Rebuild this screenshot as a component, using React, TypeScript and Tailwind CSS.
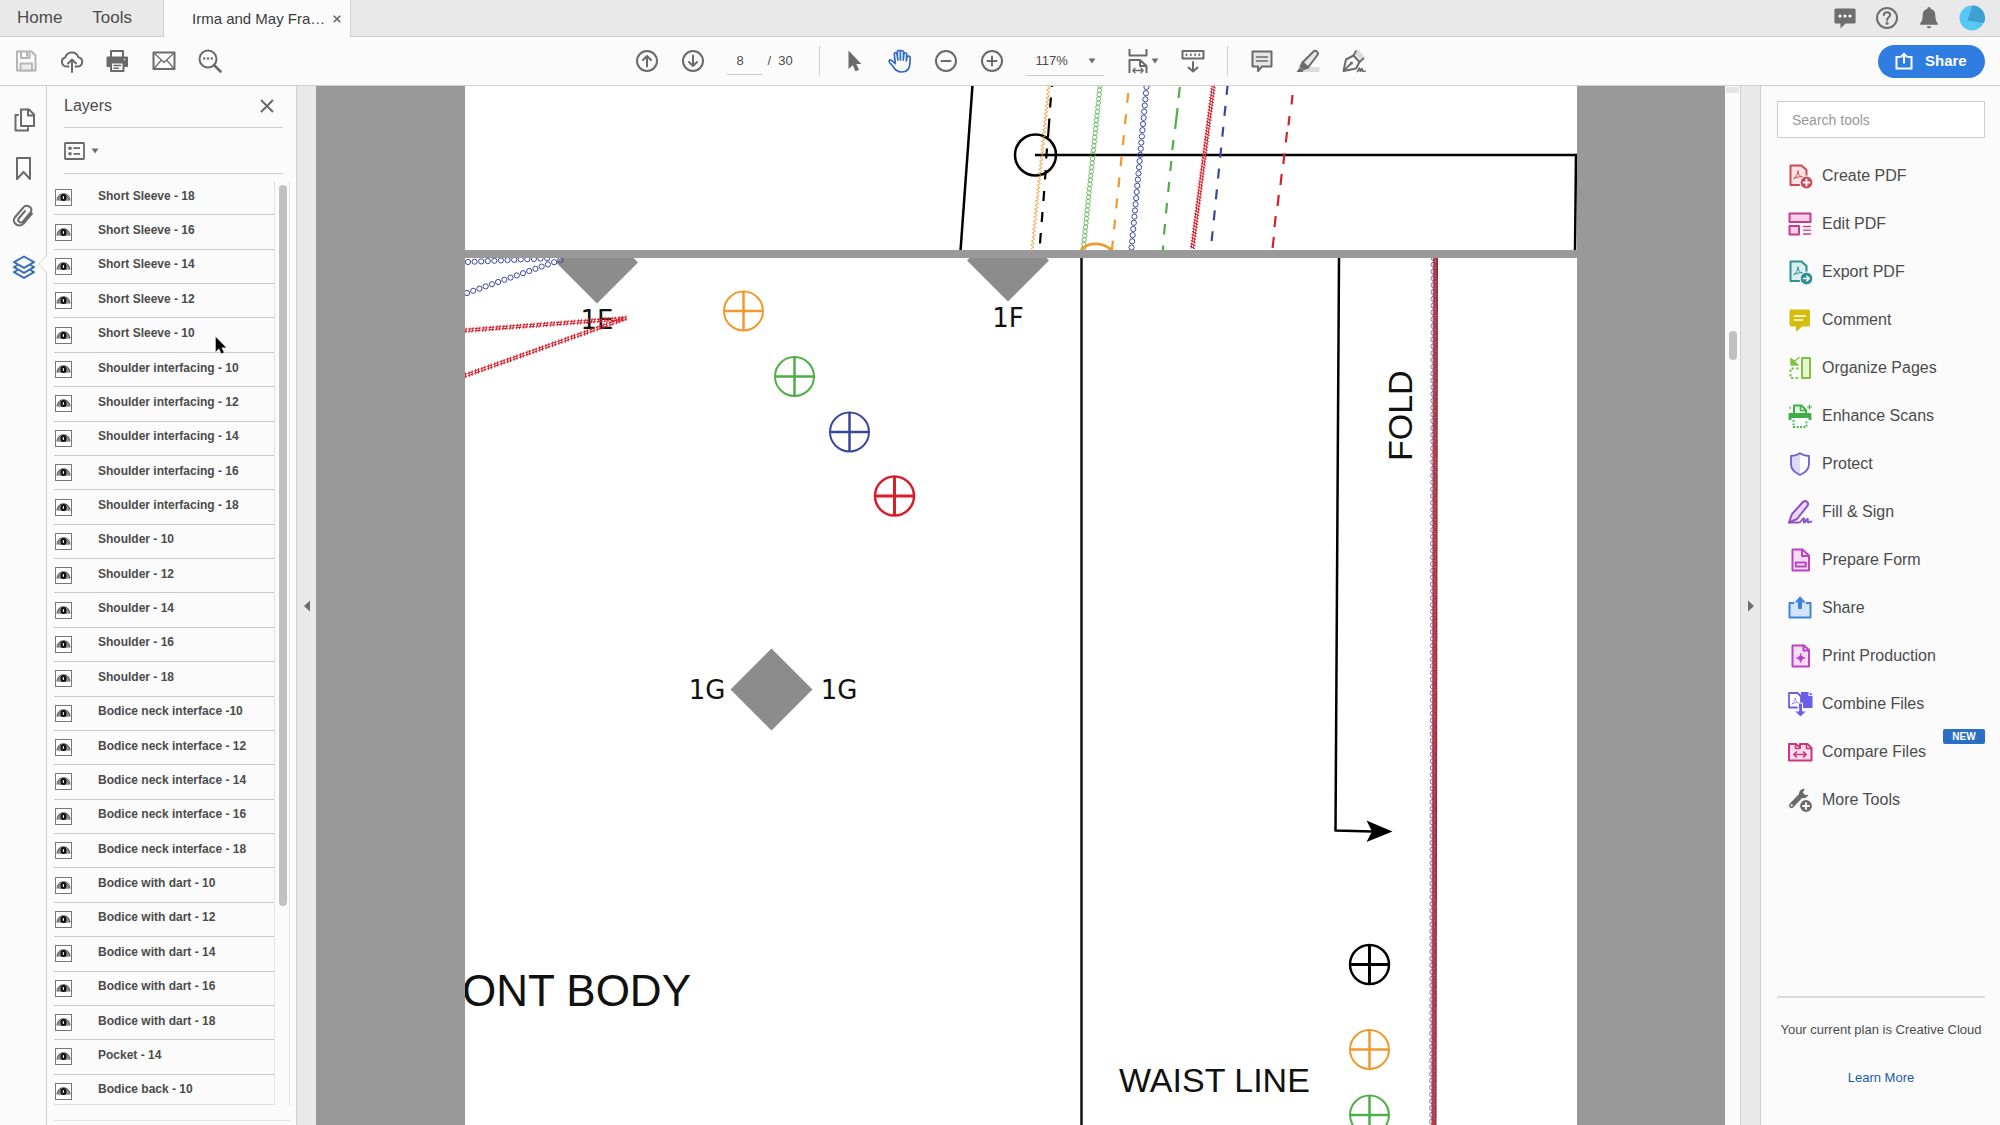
import React from "react";

type IconProps = { children: React.ReactNode; className?: string };

function Icon({ children, className = "size-6" }: IconProps) {
  return (
    <svg viewBox="0 0 24 24" fill="none" stroke="currentColor" strokeWidth="2" strokeLinejoin="round" strokeLinecap="round" aria-hidden="true" className={className}>
      {children}
    </svg>
  );
}

function IconButton({ label, children, className = "" }: { label: string; children: React.ReactNode; className?: string }) {
  return (
    <button type="button" aria-label={label} className={`flex shrink-0 items-center justify-center ${className}`}>
      {children}
    </button>
  );
}

function Caret() {
  return (
    <svg viewBox="0 0 8 6" className="h-[6px] w-2 shrink-0" aria-hidden="true">
      <path d="M0.5 0.5h7L4 5.5z" fill="#6e6e6e" />
    </svg>
  );
}

/* ---------- Top tab bar ---------- */

function TabBar() {
  return (
    <header className="flex h-[37px] shrink-0 bg-[#e9e9e9] text-[#4b4b4b]">
      <nav className="flex w-[164px] items-center gap-[30px] border-r border-b border-[#cfcfcf] pl-[17px] text-[17px]">
        <button type="button">Home</button>
        <button type="button">Tools</button>
      </nav>
      <div className="flex w-[186px] items-center bg-[#fbfbfb] pt-px pl-7 text-[15px] text-[#3c3c3c]">
        <span className="w-[132px] whitespace-nowrap">Irma and May Fra…</span>
        <IconButton label="Close tab" className="ml-[9px]">
          <svg viewBox="0 0 8 8" className="size-2" aria-hidden="true">
            <path d="M0.7 0.7l6.6 6.6M7.3 0.7L0.7 7.3" stroke="#666" strokeWidth="1.6" />
          </svg>
        </IconButton>
      </div>
      <div className="flex flex-1 items-center justify-end gap-[18px] border-b border-l border-[#cfcfcf] pr-[15px] text-[#6e6e6e]">
        <IconButton label="Notifications chat">
          <Icon>
            <path d="M3 2.500h18a1.600 1.600 0 0 1 1.600 1.600v11.800a1.600 1.600 0 0 1-1.600 1.600H12.500L7.500 22.500v-5H3a1.600 1.600 0 0 1-1.600-1.600V4.100A1.600 1.600 0 0 1 3 2.500z" fill="currentColor" stroke="none" />
            <g fill="#fff" stroke="none">
              <circle cx="7" cy="10" r="1.600" />
              <circle cx="12" cy="10" r="1.600" />
              <circle cx="17" cy="10" r="1.600" />
            </g>
          </Icon>
        </IconButton>
        <IconButton label="Help">
          <Icon>
            <circle cx="12" cy="12" r="10" />
            <path d="M8.900 9.300c0-2 1.400-3 3.100-3s3.100 1 3.100 2.700c0 2.300-3 2.400-3 5" />
            <circle cx="12.100" cy="17.200" r="0.600" />
          </Icon>
        </IconButton>
        <IconButton label="Alerts">
          <Icon>
            <path d="M10.300 2.800a1.700 1.700 0 0 1 3.400 0c3 .8 4.600 3.200 4.600 6.200 0 4.500 1 6.800 2.500 8.300v1.500H3.200v-1.500c1.500-1.500 2.500-3.800 2.500-8.300 0-3 1.600-5.400 4.600-6.200zM9.800 20.200h4.400c-.2 1.400-1.100 2-2.200 2s-2-.6-2.200-2z" fill="currentColor" stroke="none" />
          </Icon>
        </IconButton>
        <IconButton label="Account">
          <svg viewBox="0 0 26 26" className="size-[26px]" aria-hidden="true">
            <circle cx="13" cy="13" r="12.500" fill="#56c8f5" />
            <path d="M13.500.5L8.500 15.500 25 18A12.500 12.500 0 0 0 13.500.5z" fill="#40a0cf" />
          </svg>
        </IconButton>
      </div>
    </header>
  );
}

/* ---------- Toolbar ---------- */

function Toolbar() {
  return (
    <div className="grid h-[49px] shrink-0 grid-cols-[1fr_auto_1fr] items-center border-b border-[#cfcfcf] bg-[#fbfbfb] text-[#6a6a6a]">
      <div className="flex gap-[22px] pl-[14px]">
        <IconButton label="Save" className="text-[#b5b5b5]">
          <Icon>
            <path d="M3 2.500h14.500L21.500 6.500V21.500H3z" />
            <path d="M7 2.500v6.500h8.500v-6.500M13 4v3" />
            <path d="M6.500 21.500V14.500h11.500v7z" fill="#ededed" />
          </Icon>
        </IconButton>
        <IconButton label="Upload">
          <Icon>
            <path d="M8.500 17.500H6A4.600 4.600 0 0 1 5.300 8.500 6.800 6.800 0 0 1 18.300 8.200 4.700 4.700 0 0 1 18 17.500h-2.500" />
            <path d="M12 23V11M8 14.500l4-4 4 4" />
          </Icon>
        </IconButton>
        <IconButton label="Print">
          <Icon>
            <path d="M5 8V2h12v6" />
            <path d="M1.500 8.500h19.500v8.500h-3v-3H4.500v3h-3z" fill="currentColor" />
            <path d="M5 13.500h12.500v8.500H5z" fill="#fbfbfb" />
            <path d="M8 16.500h6.500M8 19.200h4.500" strokeWidth="1.500" />
            <circle cx="18.500" cy="10.500" r="0.800" fill="#fff" stroke="none" />
          </Icon>
        </IconButton>
        <IconButton label="Email">
          <Icon>
            <path d="M1.500 3.500h21v16.500h-21z" />
            <path d="M2 4l10 9.500L22 4M2 19.500l7-8M22 19.500l-7-8" strokeWidth="1.200" />
          </Icon>
        </IconButton>
        <IconButton label="Find">
          <Icon>
            <circle cx="10" cy="10" r="8.500" />
            <path d="M16.500 16.500l6 6" strokeWidth="2.600" />
            <g fill="currentColor" stroke="none">
              <circle cx="6.200" cy="9.500" r="1.200" />
              <circle cx="10" cy="9.500" r="1.200" />
              <circle cx="13.800" cy="9.500" r="1.200" />
            </g>
          </Icon>
        </IconButton>
      </div>

      <div className="flex items-center gap-[22px]">
        <IconButton label="Previous page">
          <Icon>
            <circle cx="12" cy="12" r="10" />
            <path d="M12 17.500V7M8 11l4-4 4 4" />
          </Icon>
        </IconButton>
        <IconButton label="Next page">
          <Icon>
            <circle cx="12" cy="12" r="10" />
            <path d="M12 6.500V17M8 13l4 4 4-4" />
          </Icon>
        </IconButton>
        <div className="flex w-[70px] items-center gap-[6px] text-[13px] text-[#4b4b4b]">
          <input aria-label="Page number" defaultValue="8" className="h-7 w-[35px] border-b border-[#c8c8c8] bg-transparent pr-2 text-center" />
          <span className="whitespace-pre">/  30</span>
        </div>
        <div className="h-[30px] w-px bg-[#cfcfcf]" />
        <IconButton label="Select tool">
          <Icon>
            <path d="M6.500 1.500v18.500l4.300-3.700 2.700 6 3.500-1.600-2.700-5.800h5z" fill="currentColor" stroke="none" />
          </Icon>
        </IconButton>
        <IconButton label="Hand tool" className="text-[#2d6cc0]">
          <Icon>
            <path d="M7.200 13.500L6.300 5.200c-.2-2 2.400-2.300 2.700-.3l.9 6M9.600 9L9.300 3c0-2.200 3-2.200 3.100 0v8M12.400 10V3c.1-2 3-2 3.100.2l-.2 8M15.400 10l.5-5c.3-1.900 2.900-1.600 2.800.4L18.400 12M18.500 10.500l.6-2.300c.6-1.900 3.300-1.400 3.100.6l-.4 6.200c-.2 5-3.300 8-8.300 8-4.200 0-6.500-1.800-8.200-5.300L1.800 13.800c-1.200-1.700-.6-3.400 1.500-2.600 1.300.5 2.500 2 3.900 3.400" strokeWidth="1.700" />
          </Icon>
        </IconButton>
        <IconButton label="Zoom out">
          <Icon>
            <circle cx="12" cy="12" r="10" />
            <path d="M7.500 12h9" />
          </Icon>
        </IconButton>
        <IconButton label="Zoom in">
          <Icon>
            <circle cx="12" cy="12" r="10" />
            <path d="M7.500 12h9M12 7.500v9" />
          </Icon>
        </IconButton>
        <div className="flex w-[78px] items-center border-b border-[#c8c8c8] pr-2">
          <select aria-label="Zoom level" className="h-7 flex-1 appearance-none bg-transparent pl-[10px] text-[13px] text-[#4b4b4b]">
            <option>117%</option>
          </select>
          <Caret />
        </div>
        <IconButton label="Page fit" className="w-[33px] gap-px">
          <Icon className="h-[26px] w-6">
            <path d="M3.500 0v6.500h17V0M3.500 24v-13h10.500l6.500 6v7M14 11v6h6.500" strokeLinecap="butt" />
            <path d="M7 21.500h10M9 19.300L6.800 21.500 9 23.700M15 19.300l2.200 2.200-2.200 2.200" strokeWidth="1.400" />
          </Icon>
          <Caret />
        </IconButton>
        <IconButton label="Scrolling">
          <Icon>
            <path d="M1.500 2h21v7.500h-21z" />
            <path d="M5.500 5v1.500M9.800 5v1.500M14.100 5v1.500M18.400 5v1.500" strokeWidth="1.600" />
            <path d="M12 13v9.500M7.500 18.500l4.500 4 4.500-4" />
          </Icon>
        </IconButton>
        <div className="h-[30px] w-px bg-[#cfcfcf]" />
        <IconButton label="Add comment">
          <Icon>
            <path d="M2.500 2.500h19v15H12L8 22v-4.500H2.500z" fill="#e6e6e6" />
            <path d="M6.500 8h11M6.500 12h11" strokeWidth="1.500" />
          </Icon>
        </IconButton>
        <IconButton label="Highlight">
          <Icon>
            <path d="M9 18h14.500v5H5z" fill="#dcdcdc" stroke="none" />
            <path d="M6.500 13.500L17.500 2.500c2-2 5.500.8 4 3.500L12 18.500z" fill="#e6e6e6" />
            <path d="M6.500 13.500l5.500 5-4 1.500-3.500-2.500z" fill="currentColor" />
            <path d="M3.800 18.500l4 2.700-1.300 1.800H.5z" fill="currentColor" stroke="none" />
          </Icon>
        </IconButton>
        <IconButton label="Sign">
          <Icon>
            <path d="M13 5l3.500-4 6.500 7-4 3.500z" fill="#dcdcdc" stroke="none" />
            <path d="M1.500 22L4 10.500 11.500 6.500 17.500 13 14 19.500z" fill="#fbfbfb" />
            <path d="M11.500 6.500l2.500-4.500M17.500 13l4-3.500M2 21.500l7-7" strokeWidth="1.800" />
            <circle cx="9.500" cy="14" r="1.500" fill="currentColor" stroke="none" />
            <path d="M15.500 22.500l2-3.500.8 3.300 1.700-2.800.6 2.800 2.600-.3" strokeWidth="1.600" />
          </Icon>
        </IconButton>
      </div>

      <div className="flex justify-end pr-[15px]">
        <button type="button" className="flex h-[33px] w-[107px] items-center gap-3 rounded-full bg-[#2f7de1] pl-[17px] text-[15px] font-bold text-white">
          <svg viewBox="0 0 18 18" className="size-[18px]" fill="none" stroke="#fff" strokeWidth="2" aria-hidden="true">
            <path d="M5.500 5H1.500v11.500h15V5h-4M9 11.500V2M5.800 5L9 1.800 12.200 5" />
          </svg>
          Share
        </button>
      </div>
    </div>
  );
}

/* ---------- Left side ---------- */

function NavRail() {
  return (
    <nav className="relative w-[47px] shrink-0 border-r border-[#cfcfcf] bg-[#fbfbfb] pt-[22px] pl-3 text-[#6a6a6a]">
      <div className="flex w-6 flex-col gap-6">
        <IconButton label="Page thumbnails">
          <Icon>
            <path d="M10 1.500h7L22 6.500v11.500H9V1.500z" />
            <path d="M16 1.500v6h6" />
            <path d="M6 7H3.500v15.500h12.500V20" />
          </Icon>
        </IconButton>
        <IconButton label="Bookmarks">
          <Icon>
            <path d="M5 2h13v21l-6.500-7-6.500 7z" />
          </Icon>
        </IconButton>
        <IconButton label="Attachments">
          <Icon>
            <path d="M20 9.500l-8.500 10C7.500 24.500-1 19 2.800 13.500l8.500-10C14.500-.5 22 3.500 18.500 8.500l-7.500 9c-2.300 2.500-6-.3-4.300-3L13 7" />
          </Icon>
        </IconButton>
        <IconButton label="Layers" className="mt-[3px] text-[#3a6fb7]">
          <Icon>
            <path d="M12 1.500l10 5.700-10 5.700-10-5.700z" />
            <path d="M4.800 10.500L2 12.200l10 5.600 10-5.600-2.800-1.700M4.800 15.500L2 17.200l10 5.700 10-5.700-2.800-1.700" />
          </Icon>
        </IconButton>
      </div>
      <svg viewBox="0 0 9 18" className="absolute top-[169px] -right-px h-[18px] w-[9px]" aria-hidden="true">
        <path d="M9 0L1 9l8 9" fill="#fbfbfb" stroke="#cfcfcf" />
      </svg>
    </nav>
  );
}

const LAYERS = [
  "Short Sleeve - 18",
  "Short Sleeve - 16",
  "Short Sleeve - 14",
  "Short Sleeve - 12",
  "Short Sleeve - 10",
  "Shoulder interfacing - 10",
  "Shoulder interfacing - 12",
  "Shoulder interfacing - 14",
  "Shoulder interfacing - 16",
  "Shoulder interfacing - 18",
  "Shoulder - 10",
  "Shoulder - 12",
  "Shoulder - 14",
  "Shoulder - 16",
  "Shoulder - 18",
  "Bodice neck interface -10",
  "Bodice neck interface - 12",
  "Bodice neck interface - 14",
  "Bodice neck interface - 16",
  "Bodice neck interface - 18",
  "Bodice with dart - 10",
  "Bodice with dart - 12",
  "Bodice with dart - 14",
  "Bodice with dart - 16",
  "Bodice with dart - 18",
  "Pocket - 14",
  "Bodice back - 10",
];

function Eye() {
  return (
    <svg viewBox="0 0 17 17" className="size-[17px]" aria-hidden="true">
      <rect x="0.500" y="0.500" width="16" height="16" fill="#fff" stroke="#777" />
      <path d="M2.500 11.500C2.500 7 5.500 5 8.500 5s6 2 6 6.500c-2 .6-10 .6-12 0z" fill="#8f8f8f" />
      <path d="M2 11.500C2.500 6.500 5.500 4.800 8.500 4.800s6 1.700 6.500 6.700" fill="none" stroke="#333" strokeWidth="1" />
      <ellipse cx="8.500" cy="8.600" rx="3" ry="3.500" fill="#111" />
      <rect x="7.800" y="7.200" width="1.200" height="2.600" fill="#fff" />
    </svg>
  );
}

function LayersPanel() {
  return (
    <aside className="relative flex w-[250px] shrink-0 flex-col border-r border-[#cfcfcf] bg-[#fbfbfb] text-[#4b4b4b]">
      <div className="mr-[13px] ml-[17px] flex h-[42px] items-center justify-between border-b border-[#cfcfcf] pr-[9px] pb-px">
        <h2 className="text-[16px]">Layers</h2>
        <IconButton label="Close panel">
          <svg viewBox="0 0 14 14" className="size-[14px]" aria-hidden="true">
            <path d="M1 1l12 12M13 1L1 13" stroke="#6a6a6a" strokeWidth="2" />
          </svg>
        </IconButton>
      </div>
      <div className="mr-[13px] ml-[17px] flex h-[46px] items-center border-b border-[#cfcfcf]">
        <button type="button" aria-label="Options" className="flex items-center gap-[6px]">
          <svg viewBox="0 0 21 18" className="h-[18px] w-[21px]" fill="none" stroke="#6a6a6a" strokeWidth="1.800" aria-hidden="true">
            <rect x="1" y="1" width="19" height="16" rx="0.500" />
            <circle cx="6" cy="6.200" r="1.800" fill="#6a6a6a" stroke="none" />
            <circle cx="6" cy="11.800" r="1.800" fill="#6a6a6a" stroke="none" />
            <path d="M9.500 6.200h6.500M9.500 11.800h6.500" />
          </svg>
          <Caret />
        </button>
      </div>
      <div className="mt-[7px] mr-[6px] mb-[15px] ml-[7px] flex min-h-0 flex-1">
        <div className="min-w-0 flex-1 overflow-hidden border-b border-[#dedede]">
          <ul className="grid h-[928px] auto-rows-fr">
            {LAYERS.map((name) => (
              <li key={name} className="flex items-center gap-[26px] border-b border-[#c9c9c9] pl-px text-[12px] font-bold">
                <button type="button" aria-label={`Toggle ${name}`}>
                  <Eye />
                </button>
                <span className="pb-1 whitespace-nowrap">{name}</span>
              </li>
            ))}
          </ul>
        </div>
        <div className="w-4 shrink-0 border-x border-[#e4e4e4] pt-1 pl-1">
          <div className="h-[721px] w-2 rounded-full bg-[#c1c1c1]" />
        </div>
      </div>
      <div className="mr-[6px] mb-1 ml-[7px] h-px shrink-0 bg-[#e4e4e4]" />
      <svg viewBox="0 0 12 18" className="absolute top-[250px] left-[168px] h-[18px] w-3" aria-hidden="true">
        <path d="M0.500 0.500v15.500l3.500-3.200 2.300 5 2.800-1.200-2.300-4.800h4.700z" fill="#000" stroke="#fff" strokeWidth="0.400" />
      </svg>
    </aside>
  );
}

function Gutter({ direction }: { direction: "left" | "right" }) {
  return (
    <button
      type="button"
      aria-label={direction === "left" ? "Collapse left panel" : "Collapse right panel"}
      className="flex w-[19px] shrink-0 items-center justify-center bg-[#e9e9e9]"
    >
      <svg viewBox="0 0 6 12" className={direction === "left" ? "h-3 w-[6px]" : "h-3 w-[6px] rotate-180"} aria-hidden="true">
        <path d="M6 0.500v11L0 6z" fill="#6e6e6e" />
      </svg>
    </button>
  );
}

/* ---------- Pattern drawing ---------- */

type Segment = { x1: number; y1: number; x2: number; y2: number };

function along({ x1, y1, x2, y2 }: Segment, step: number) {
  const length = Math.hypot(x2 - x1, y2 - y1);
  const ux = (x2 - x1) / length;
  const uy = (y2 - y1) / length;
  const count = Math.floor(length / step);
  return Array.from({ length: count + 1 }, (_, i) => ({ x: x1 + ux * i * step, y: y1 + uy * i * step, ux, uy }));
}

function Beads({ line, step, r, color, width = 1 }: { line: Segment; step: number; r: number; color: string; width?: number }) {
  return (
    <g fill="none" stroke={color} strokeWidth={width}>
      {along(line, step).map((p, i) => (
        <circle key={i} cx={p.x} cy={p.y} r={r} />
      ))}
    </g>
  );
}

/* A row of small hash marks: slanted strokes in pairs with two short bars through each pair. */
function HashLine({ line, color, half = 3, step = 6.8 }: { line: Segment; color: string; half?: number; step?: number }) {
  const d = along(line, step)
    .map((p) => {
      const at = (t: number, n: number) => `${(p.x + p.ux * t - p.uy * n).toFixed(2)} ${(p.y + p.uy * t + p.ux * n).toFixed(2)}`;
      return [
        `M${at(-2.2, half)}L${at(-0.4, -half)}`,
        `M${at(0.9, half)}L${at(2.7, -half)}`,
        `M${at(-2.6, -1.1)}L${at(3.2, -1.1)}`,
        `M${at(-2.8, 1.1)}L${at(3, 1.1)}`,
      ].join("");
    })
    .join("");
  return <path d={d} stroke={color} fill="none" strokeWidth="1" />;
}

function Zigzag({ line, color }: { line: Segment; color: string }) {
  const points = along(line, 2)
    .map((p, i) => {
      const s = i % 2 ? 1.6 : -1.6;
      return `${p.x - p.uy * s},${p.y + p.ux * s}`;
    })
    .join(" ");
  return <polyline points={points} fill="none" stroke={color} strokeWidth="0.900" />;
}

function Target({ x, y, color, width = 2 }: { x: number; y: number; color: string; width?: number }) {
  return (
    <g fill="none" stroke={color} strokeWidth={width}>
      <circle cx={x} cy={y} r="19.500" />
      <path d={`M${x - 19.5} ${y}h39M${x} ${y - 19.5}v39`} strokeWidth={width + 0.5} />
    </g>
  );
}

const ORANGE = "#ee9a2e";
const GREEN = "#4fae46";
const BLUE = "#38479c";
const RED = "#d81f2c";

function UpperPage() {
  return (
    <svg viewBox="465 86 1112 164" className="block h-[164px] w-[1112px] shrink-0 bg-white" role="img" aria-label="Pattern page 7">
      <g fill="none" stroke="#000" strokeWidth="2.500">
        <path d="M972.500 85L960.500 251" />
        <circle cx="1035.500" cy="155" r="20.500" />
        <path d="M1035 155H1576L1575 251" />
        <path d="M1051.800 85.500v1.500M1050.900 97.500l-.8 10M1049.400 118.500l-1.400 19M1047 148.500l-.8 10M1045.800 170l-.8 9.500M1044.200 191l-.8 10M1042.500 212l-.8 10M1040.800 233l-.8 10.500" strokeWidth="2.200" />
      </g>
      <Zigzag line={{ x1: 1049, y1: 84, x2: 1032, y2: 251 }} color={ORANGE} />
      <Beads line={{ x1: 1100, y1: 86, x2: 1083, y2: 252 }} step={4.3} r={2.2} color={GREEN} width={0.8} />
      <g fill="none" strokeWidth="2.200">
        <path d="M1128.200 93L1111.800 251" stroke={ORANGE} strokeDasharray="10 11.200" />
        <path d="M1081 251c5-9 22-10 31.500 0" stroke={ORANGE} strokeWidth="2.800" />
        <path d="M1179.800 87l-1.200 11M1177.600 108l-2.500 21M1173.500 140l-1.200 10M1171.300 161l-1 10M1169.200 182l-1 10M1167 203l-1 10.500M1165 224l-1 10.500M1163.300 245.500l-.6 6" stroke={GREEN} />
        <path d="M1227.600 85L1211.600 241.500" stroke={BLUE} strokeDasharray="10 11" />
        <path d="M1292.500 95l-1 9.500M1289.500 116l-1 9.500M1287 132l-1.200 10.500M1284.500 153.500l-1.200 10.500M1281.700 174l-1.200 11M1278.800 195l-1.300 11M1275.700 216l-1.200 11M1273.800 237l-1.200 11" stroke={RED} />
      </g>
      <Beads line={{ x1: 1146.5, y1: 87, x2: 1131.5, y2: 248 }} step={6.2} r={2.6} color={BLUE} />
      <HashLine line={{ x1: 1213.5, y1: 85, x2: 1192, y2: 251 }} color={RED} half={2.6} step={6} />
    </svg>
  );
}

function LowerPage() {
  return (
    <svg viewBox="465 258 1112 880" className="block h-[880px] w-[1112px] shrink-0 bg-white" role="img" aria-label="Pattern page 8">
      <g fill="#8c8c8c">
        <path d="M597 221.500l41 41-41 41-41-41z" />
        <path d="M1008 219.500l41 41-41 41-41-41z" />
        <path d="M771.500 648.500l41 41-41 41-41-41z" />
      </g>
      <g fill="#111" fontFamily="'DejaVu Sans', sans-serif" fontSize="26" textAnchor="middle">
        <text x="597" y="329">1E</text>
        <text x="1008" y="327">1F</text>
        <text x="707" y="699">1G</text>
        <text x="839" y="699">1G</text>
      </g>
      <Beads line={{ x1: 468, y1: 262, x2: 552, y2: 258 }} step={6.6} r={2.6} color={BLUE} />
      <Beads line={{ x1: 467, y1: 293, x2: 566, y2: 258 }} step={6.6} r={2.6} color={BLUE} />
      <HashLine line={{ x1: 464, y1: 330.5, x2: 625, y2: 318.5 }} color={RED} half={2.6} />
      <HashLine line={{ x1: 464, y1: 376, x2: 625, y2: 318.5 }} color={RED} half={2.6} />

      <Target x={743.5} y={311} color={ORANGE} />
      <Target x={794.5} y={376.5} color={GREEN} />
      <Target x={849.5} y={432} color={BLUE} />
      <Target x={894.5} y={496} color={RED} width={2.5} />
      <Target x={1369.5} y={964.5} color="#000" width={2.5} />
      <Target x={1369.5} y={1049.5} color={ORANGE} />
      <Target x={1369.5} y={1115} color={GREEN} />

      <path d="M1081.500 258V1138" stroke="#111" strokeWidth="2.500" />
      <path d="M1339 258L1335.500 830.500L1372 831.500" fill="none" stroke="#000" strokeWidth="2.500" strokeLinejoin="round" />
      <path d="M1392.500 831.500L1366.500 820.500L1372 831.500L1366.500 842z" fill="#000" />

      <g>
        <path d="M1437 258L1435.500 1138" stroke="#6b3a34" strokeWidth="2" />
        <path d="M1434.500 258L1433 1138" stroke="#d9606a" strokeWidth="3.500" />
        <Beads line={{ x1: 1433.5, y1: 258, x2: 1432, y2: 1138 }} step={6.8} r={2.5} color={BLUE} width={0.7} />
        <HashLine line={{ x1: 1435.5, y1: 258, x2: 1434, y2: 1138 }} color="#b8303c" half={2} step={6} />
      </g>

      <g fill="#111" fontFamily="'Liberation Sans', Arial, sans-serif">
        <text x="691" y="1006" fontSize="44" textAnchor="end">ONT BODY</text>
        <text x="1119" y="1092" fontSize="34">WAIST LINE</text>
        <text transform="translate(1412 461) rotate(-90)" fontSize="34">FOLD</text>
      </g>
    </svg>
  );
}

function DocumentView() {
  return (
    <main className="flex min-w-0 flex-1 flex-col items-center gap-2 overflow-hidden bg-[#999999] pl-px">
      <UpperPage />
      <LowerPage />
    </main>
  );
}

function DocumentScrollbar() {
  return (
    <div className="w-4 shrink-0 border-r border-[#cfcfcf] bg-[#fbfbfb] px-px pt-px">
      <div className="h-[6px] bg-[#e4e4e4]" />
      <div className="mx-auto mt-[238px] h-[29px] w-2 rounded-full bg-[#c1c1c1]" />
    </div>
  );
}

/* ---------- Tools panel ---------- */

const PDF_MARK = "M7 14.500c2-1 4-4.500 4-7.500M11 7c0 3 1.500 5.500 4.500 6M7 14.500c2-1.500 6-2 8.500-1.500";

const TOOLS: { name: string; color: string; icon: React.ReactNode; isNew?: boolean }[] = [
  {
    name: "Create PDF",
    color: "text-[#cf4a54]",
    icon: (
      <>
        <path d="M2.500 1.500h11L18.500 6v15h-16z" fill="#fbe3e3" />
        <path d={PDF_MARK} strokeWidth="1" transform="translate(-1 0)" />
        <circle cx="18.500" cy="18.500" r="6.500" fill="currentColor" stroke="#fbfbfb" strokeWidth="1.200" />
        <path d="M18.500 15.500v6M15.500 18.500h6" stroke="#fff" strokeWidth="1.800" />
      </>
    ),
  },
  {
    name: "Edit PDF",
    color: "text-[#c93a8f]",
    icon: (
      <>
        <path d="M1.500 1.500h21v8.500h-21zM1.500 14h9.500v8.500h-9.500z" fill="#f7d3ea" />
        <path d="M15.500 14.500h7M15.500 18.200h7M15.500 22h7" strokeWidth="1.300" />
      </>
    ),
  },
  {
    name: "Export PDF",
    color: "text-[#2f8f92]",
    icon: (
      <>
        <path d="M2.500 1.500h11L18.500 6v15h-16z" fill="#d8f0f2" />
        <path d={PDF_MARK} strokeWidth="1" transform="translate(-1 0)" />
        <circle cx="18.500" cy="18.500" r="6.500" fill="currentColor" stroke="#fbfbfb" strokeWidth="1.200" />
        <path d="M15.500 18.500h5.500M19 16.200l2.300 2.300-2.300 2.300" stroke="#fff" strokeWidth="1.600" />
      </>
    ),
  },
  {
    name: "Comment",
    color: "text-[#d6bd0c]",
    icon: (
      <>
        <path d="M3 2h17.500a1 1 0 0 1 1 1v14a1 1 0 0 1-1 1H14l-5.500 5v-5H3a1 1 0 0 1-1-1V3a1 1 0 0 1 1-1z" fill="currentColor" strokeWidth="1" />
        <path d="M6.500 8h11M6.500 12h8" stroke="#fff" strokeWidth="1.600" />
      </>
    ),
  },
  {
    name: "Organize Pages",
    color: "text-[#82c341]",
    icon: (
      <>
        <path d="M14 2h8v20h-8z" fill="#e4f7cf" />
        <path d="M10.500 12.500h-8v9.500h8" strokeDasharray="2.500 2" strokeLinecap="butt" />
        <path d="M11 1.500L5 6.500M3 2.500v6.500h7z" fill="currentColor" strokeWidth="1.500" />
      </>
    ),
  },
  {
    name: "Enhance Scans",
    color: "text-[#3fae49]",
    icon: (
      <>
        <path d="M6 10V1.500h7.500L18 6v4" fill="#e0f6e0" />
        <path d="M12.500 2v4.500H18" strokeWidth="1.500" />
        <path d="M2 16v-5.500h20V16M2 12.500h20" strokeLinecap="butt" strokeWidth="2.800" />
        <path d="M5.500 16v7h13v-7" strokeDasharray="1.800 1.600" strokeWidth="1.800" strokeLinecap="butt" />
        <path d="M21.500 1v4M19.500 3h4M2 3v1.500" strokeWidth="1.200" />
      </>
    ),
  },
  {
    name: "Protect",
    color: "text-[#6a5fcf]",
    icon: (
      <>
        <path d="M12 2v20C7 19.500 4 16.500 4 12V4.500c3 0 6-1 8-2.500z" fill="#dcdafa" stroke="none" />
        <path d="M12 1.200c2.500 1.700 5.500 2.700 9 2.800v8c0 5-3.500 8.500-9 11-5.500-2.500-9-6-9-11V4c3.500-.1 6.500-1.100 9-2.800z" strokeWidth="1.800" />
      </>
    ),
  },
  {
    name: "Fill & Sign",
    color: "text-[#9050c8]",
    icon: (
      <>
        <path d="M1 22.500L4 14 15 2c2.500-2.500 6.500.8 4.500 3.800L9 19z" fill="#ecd9fa" />
        <path d="M1 22.500h10c2 0 3.500-4.500 5-4 1 .4-1 4 .3 4 1.200 0 2.200-3.500 3.200-3.500s-.5 3.500.8 3.500 1.700-1 3-1" />
      </>
    ),
  },
  {
    name: "Prepare Form",
    color: "text-[#b944c4]",
    icon: (
      <>
        <path d="M4.500 1.500h10L21 7.500v15H4.500z" fill="#f6dcf9" />
        <path d="M14 1.500v6.500h7" />
        <rect x="7.800" y="14.500" width="10" height="4" />
      </>
    ),
  },
  {
    name: "Share",
    color: "text-[#4182d6]",
    icon: (
      <>
        <path d="M2.500 7h19v14h-19z" fill="#d3e5fa" stroke="none" />
        <path d="M5.500 7h-4v14.500h21V7h-4" />
        <path d="M12 1L7.500 6h3v6.500h3V6h3z" fill="currentColor" strokeWidth="1" />
      </>
    ),
  },
  {
    name: "Print Production",
    color: "text-[#b944c4]",
    icon: (
      <>
        <path d="M4.500 1.500h11.500L21 6v16.500H4.500z" fill="#f6dcf9" />
        <path d="M15.500 1.500v5H21" />
        <circle cx="12.700" cy="14" r="2.600" fill="currentColor" stroke="none" />
        <path d="M12.700 10v8M8.700 14h8" strokeWidth="1.300" />
      </>
    ),
  },
  {
    name: "Combine Files",
    color: "text-[#6c5ce7]",
    icon: (
      <>
        <path d="M13 0h7.500v4H24.500v12H13z" fill="currentColor" stroke="none" />
        <path d="M21.700 0l3 3h-3z" fill="currentColor" stroke="none" />
        <path d="M9 15.500H1V1h8.500L13 4.500v9" fill="#fff" strokeWidth="1.800" />
        <path d={PDF_MARK} strokeWidth="0.800" transform="translate(-1 1) scale(0.750)" />
        <path d="M10.500 11h4v8h4l-6 6-6-6h4z" fill="currentColor" stroke="#fbfbfb" strokeWidth="1" />
      </>
    ),
  },
  {
    name: "Compare Files",
    color: "text-[#c9377f]",
    icon: (
      <>
        <path d="M1 4h7l4 3.500V4h7.500l4 4v12.500H1z" fill="#fbdceb" />
        <path d="M7.500 4v4.500H12V4M18.500 4v4.500h5" strokeWidth="1.600" />
        <path d="M6 14.500h12M8.500 12l-2.700 2.500 2.700 2.500M15.500 12l2.700 2.500-2.700 2.500" strokeWidth="1.700" />
      </>
    ),
    isNew: true,
  },
  {
    name: "More Tools",
    color: "text-[#6a6a6a]",
    icon: (
      <>
        <path d="M3.500 17.500L13.500 7" strokeWidth="5" />
        <path d="M17 .8c-4-.5-7 3-5.500 7 2 3.500 7.500 3 8.800-1L17 7l-2.200-2.500z" fill="currentColor" stroke="none" />
        <circle cx="3.700" cy="17.300" r="1.100" fill="#fbfbfb" stroke="none" />
        <circle cx="18" cy="18" r="6.500" fill="currentColor" stroke="#fbfbfb" strokeWidth="1.200" />
        <path d="M18 15v6M15 18h6" stroke="#fff" strokeWidth="1.800" />
      </>
    ),
  },
];

function ToolsPanel() {
  return (
    <aside className="flex w-[240px] shrink-0 flex-col border-l border-[#cfcfcf] bg-[#fbfbfb] pr-[15px] pl-4 text-[#4b4b4b]">
      <input
        type="search"
        aria-label="Search tools"
        placeholder="Search tools"
        className="mt-[15px] h-[37px] shrink-0 border border-[#cccccc] bg-white px-[14px] text-[14px] placeholder:text-[#979797]"
      />
      <ul className="mt-[14px]">
        {TOOLS.map((tool) => (
          <li key={tool.name} className="relative">
            <button type="button" className="flex h-12 w-full items-center gap-[10px] pl-[11px] text-left text-[16px]">
              <span className={tool.color}>
                <Icon className="size-6 overflow-visible">{tool.icon}</Icon>
              </span>
              {tool.name}
            </button>
            {tool.isNew && (
              <span className="absolute top-px right-0 flex h-[15px] w-[42px] items-center justify-center rounded-xs bg-[#2b6fc4] text-[10px] font-bold text-white">
                NEW
              </span>
            )}
          </li>
        ))}
      </ul>
      <div className="mt-auto mb-[39px] border-t-2 border-[#dcdcdc] pt-6 text-center text-[13px]">
        <p className="leading-4 whitespace-nowrap">Your current plan is Creative Cloud</p>
        <a href="#learn-more" className="mt-8 block leading-4 text-[#1d5aa8]">
          Learn More
        </a>
      </div>
    </aside>
  );
}

export default function App() {
  return (
    <div className="flex h-screen flex-col overflow-hidden bg-[#fbfbfb] font-['Liberation_Sans',Arial,sans-serif]">
      <TabBar />
      <Toolbar />
      <div className="flex min-h-0 flex-1">
        <NavRail />
        <LayersPanel />
        <Gutter direction="left" />
        <DocumentView />
        <DocumentScrollbar />
        <Gutter direction="right" />
        <ToolsPanel />
      </div>
    </div>
  );
}
